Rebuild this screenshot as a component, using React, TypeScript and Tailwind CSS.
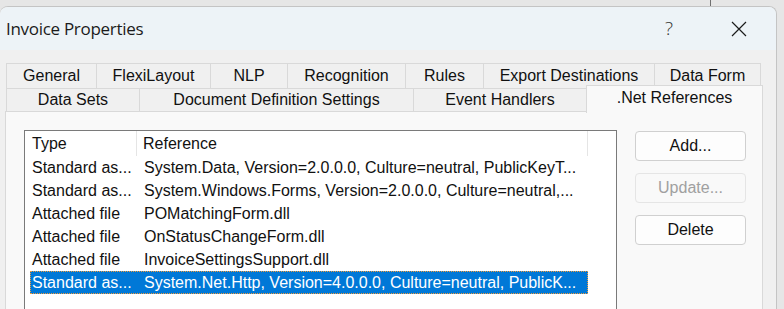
import React from 'react';

const ROW1 = [
  { label: 'General', w: 90 },
  { label: 'FlexiLayout', w: 114 },
  { label: 'NLP', w: 77 },
  { label: 'Recognition', w: 118 },
  { label: 'Rules', w: 78 },
  { label: 'Export Destinations', w: 171 },
  { label: 'Data Form', w: 107 },
];

const ROW2 = [
  { label: 'Data Sets', w: 133 },
  { label: 'Document Definition Settings', w: 274 },
  { label: 'Event Handlers', w: 173 },
];

const REFS = [
  { type: 'Standard as...', ref: 'System.Data, Version=2.0.0.0, Culture=neutral, PublicKeyT...' },
  { type: 'Standard as...', ref: 'System.Windows.Forms, Version=2.0.0.0, Culture=neutral,...' },
  { type: 'Attached file', ref: 'POMatchingForm.dll' },
  { type: 'Attached file', ref: 'OnStatusChangeForm.dll' },
  { type: 'Attached file', ref: 'InvoiceSettingsSupport.dll' },
  { type: 'Standard as...', ref: 'System.Net.Http, Version=4.0.0.0, Culture=neutral, PublicK...', selected: true },
];

const font = "font-['Liberation_Sans',Arial,sans-serif]";

export default function App() {
  return (
    <div className={`relative w-[784px] h-[309px] overflow-hidden bg-[#e6e6e6] pt-[6px] ${font}`}>
      {/* window behind */}
      <div className="absolute left-[710px] top-0 h-[6px] w-px bg-[#707070]" />

      <div className="w-[777px] h-[303px] flex flex-col rounded-tl-[8px] rounded-tr-[8px] border-t border-r border-[#c4c4c4] bg-[#f0f0f0] overflow-hidden">
        {/* Title bar */}
        <header className="h-[43px] shrink-0 flex items-center bg-[#edf3f7] pl-[6px]">
          <span className="text-[17px] text-[#1b1b1b] tracking-[-0.3px] font-['Open_Sans',sans-serif]">Invoice Properties</span>
          <span className="ml-auto mr-[58px] text-[19px] font-light text-[#333] font-['Open_Sans',sans-serif]">?</span>
          <svg width="16" height="16" viewBox="0 0 16 16" className="mr-[29px]">
            <path d="M1 1 L15 15 M15 1 L1 15" stroke="#1b1b1b" strokeWidth="1.2" fill="none" />
          </svg>
        </header>

        {/* Body */}
        <div className="flex-1 pt-[13px] pl-[5px]">
          {/* Tabs row 1 */}
          <div className="flex h-[25px] ml-px">
            {ROW1.map((t, i) => (
              <div
                key={t.label}
                className={`flex items-center justify-center border-t border-l border-[#d9d9d9] text-[16px] text-[#111] bg-[#f0f0f0] ${i === ROW1.length - 1 ? 'border-r' : ''}`}
                style={{ width: t.w }}
              >
                {t.label}
              </div>
            ))}
          </div>
          {/* Tabs row 2 */}
          <div className="flex h-[23px] ml-px items-start">
            {ROW2.map((t) => (
              <div
                key={t.label}
                className="h-[23px] flex items-center justify-center border-t border-l border-[#d9d9d9] text-[16px] text-[#111] bg-[#f0f0f0]"
                style={{ width: t.w }}
              >
                {t.label}
              </div>
            ))}
            <div className="relative z-10 w-[177px] h-[28px] -mt-[3px] flex items-center justify-center border-t border-l border-r border-[#d9d9d9] bg-[#f9f9f9] text-[16px] text-[#111] pb-[3px]">
              .Net References
            </div>
          </div>

          {/* Panel */}
          <div className="w-[758px] h-[200px] border border-[#d9d9d9] bg-[#f9f9f9] flex pt-[18px] pl-[18px] gap-[18px]">
            {/* List view */}
            <div className="w-[593px] h-[190px] border border-[#7a7a7a] bg-white text-[16px] text-[#111]">
              <div className="flex h-[25px] items-center">
                <div className="w-[112px] h-full flex items-center pl-[7px] border-r border-[#e5e5e5]">Type</div>
                <div className="w-[451px] h-full flex items-center pl-[6px] border-r border-[#e5e5e5]">Reference</div>
              </div>
              {REFS.map((r, i) => (
                <div
                  key={i}
                  className={`ml-[5px] w-[558px] h-[23px] flex items-center ${r.selected ? 'bg-[#0078d7] text-white outline outline-1 outline-dotted outline-[#f29b3a] -outline-offset-1' : ''}`}
                >
                  <div className="w-[107px] pl-[2px] whitespace-nowrap">{r.type}</div>
                  <div className="pl-[7px] whitespace-nowrap">{r.ref}</div>
                </div>
              ))}
            </div>

            {/* Buttons */}
            <div className="flex flex-col gap-[12px] pt-px">
              <button className="w-[111px] h-[30px] rounded-[4px] border border-[#d0d0d0] bg-[#fdfdfd] text-[16px] text-[#111]">Add...</button>
              <button className="w-[111px] h-[30px] rounded-[4px] border border-[#e5e5e5] bg-[#f9f9f9] text-[16px] text-[#a0a0a0]">Update...</button>
              <button className="w-[111px] h-[30px] rounded-[4px] border border-[#d0d0d0] bg-[#fdfdfd] text-[16px] text-[#111]">Delete</button>
            </div>
          </div>
        </div>
      </div>
    </div>
  );
}
